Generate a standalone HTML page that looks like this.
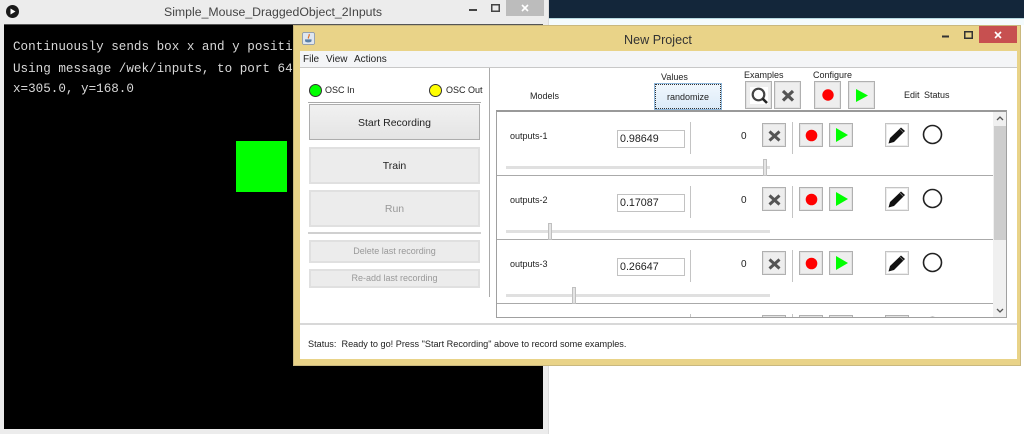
<!DOCTYPE html>
<html><head><meta charset="utf-8"><title>New Project</title>
<style>
html{margin:0;padding:0;width:1024px;height:434px;overflow:hidden;background:#fff}
body{margin:0;padding:0;width:1024px;height:434px;overflow:hidden;position:relative;background:#fff;font-family:"Liberation Sans",sans-serif;color:#222;filter:blur(.3px)}
.a{position:absolute}
.t{position:absolute;white-space:nowrap;font-size:9px;line-height:12px;color:#222}
.menu{font-size:10px;top:54px}
.m{position:absolute;white-space:nowrap;font-family:"Liberation Mono",monospace;font-size:12.6px;line-height:14px;color:#d8d8d8}
.b{position:absolute;box-sizing:border-box;background:#eee;border:1px solid #b0b0b0;box-shadow:inset 0 0 0 1px #e2e2e2}
.big{position:absolute;box-sizing:border-box;background:#ececec;border:2px solid #e0e0e0;text-align:center;font-size:10.5px;color:#222}
.dis{color:#999}
.hl{position:absolute;background:#c4c4c4}
.inp{position:absolute;box-sizing:border-box;background:#fff;border:1px solid #c2c2c2;font-size:10.7px;line-height:16px;padding-left:2px;color:#222;width:68px;height:18px;left:617px}
.tr{position:absolute;left:506px;width:264px;height:3px;background:#e0e0e0}
.th{position:absolute;width:4px;height:17px;background:#e4e4e4;border:1px solid #c0c0c0;box-sizing:border-box}
.z{font-size:10px}
svg{position:absolute;display:block}
</style></head><body>
<!-- background app -->
<div class="a" style="left:549px;top:0;width:475px;height:18px;background:#13263a"></div>
<div class="a" style="left:549px;top:18px;width:475px;height:7px;background:#f4fbfd;border-top:1px solid #b5d8e0;box-sizing:border-box"></div>
<!-- processing window -->
<div class="a" style="left:0;top:0;width:549px;height:434px;background:#ececec;border-right:1px solid #dcdcdc;box-sizing:border-box"></div>
<div class="a" style="left:4px;top:24px;width:539px;height:405px;background:#000"></div>
<div class="a" style="left:4px;top:24px;width:539px;height:1px;background:#555"></div>
<svg style="left:6px;top:5px" width="13" height="13" viewBox="0 0 13 13"><circle cx="6.500" cy="6.500" r="6.500" fill="#1a1a1a"/><path d="M4.500 3.500 9.500 6.500 4.500 9.500Z" fill="#fff"/></svg>
<div class="t" style="left:164px;top:4px;font-size:12.3px;line-height:16px;color:#444">Simple_Mouse_DraggedObject_2Inputs</div>
<svg style="left:469px;top:8px" width="8" height="4"><rect y="1" width="8" height="2" fill="#444"/></svg>
<svg style="left:491px;top:4px" width="9" height="8"><rect x=".75" y=".75" width="7.500" height="6.500" fill="none" stroke="#444" stroke-width="1.500"/></svg>
<div class="a" style="left:506px;top:0;width:38px;height:16px;background:#bcbcbc"></div>
<svg style="left:521px;top:4px" width="8" height="8"><path d="M1 1 7 7M7 1 1 7" stroke="#fff" stroke-width="1.600"/></svg>
<div class="m" style="left:13px;top:40px">Continuously sends box x and y positi</div>
<div class="m" style="left:13px;top:62px">Using message /wek/inputs, to port 64</div>
<div class="m" style="left:13px;top:82px">x=305.0, y=168.0</div>
<div class="a" style="left:236px;top:141px;width:51px;height:51px;background:#0f0"></div>

<!-- New Project window -->
<div class="a" style="left:293px;top:25px;width:728px;height:341px;background:#e9d388;border:1px solid #c9b87e;box-sizing:border-box"></div>
<svg style="left:302px;top:32px" width="13" height="13" viewBox="0 0 15 15"><rect x=".5" y=".5" width="14" height="14" rx="2" fill="#dfe6ef" stroke="#8a97a8"/><path d="M8 2.500C9.500 4.500 6.500 5.200 7.500 7.500" fill="none" stroke="#e0702a" stroke-width="1.400"/><path d="M3.500 8.500h7.500v1.500c0 1.500-1.500 2-3.700 2s-3.800-.5-3.800-2Z" fill="#5a7fa8"/></svg>
<div class="t" style="left:624px;top:31px;font-size:12.6px;line-height:16px;color:#333;margin-top:1px">New Project</div>
<svg style="left:942px;top:35px" width="8" height="3"><rect width="7" height="2" y=".5" fill="#333"/></svg>
<svg style="left:964px;top:31px" width="9" height="8"><rect x=".75" y=".75" width="7.500" height="6.500" fill="none" stroke="#333" stroke-width="1.500"/></svg>
<div class="a" style="left:979px;top:26px;width:38px;height:17px;background:#c75050"></div>
<svg style="left:994px;top:31px" width="8" height="8"><path d="M1 1 7 7M7 1 1 7" stroke="#fff" stroke-width="1.600"/></svg>
<div class="a" style="left:300px;top:51px;width:717px;height:308px;background:#fff"></div>
<div class="a" style="left:300px;top:51px;width:717px;height:17px;box-sizing:border-box;background:#f4f5f7;border-bottom:1px solid #c8c8c8"></div>
<div class="t menu" style="left:303px">File</div>
<div class="t menu" style="left:326px">View</div>
<div class="t menu" style="left:354px">Actions</div>
<div class="hl" style="left:489px;top:68px;width:1px;height:229px;background:#aaa"></div>

<!-- left panel -->
<svg style="left:308px;top:83px" width="15" height="15"><circle cx="7.500" cy="7.500" r="6" fill="#0f0" stroke="#333"/></svg>
<div class="t" style="left:325px;top:84px">OSC In</div>
<svg style="left:428px;top:83px" width="15" height="15"><circle cx="7.500" cy="7.500" r="6" fill="#ff0" stroke="#333"/></svg>
<div class="t" style="left:446px;top:84px">OSC Out</div>
<div class="hl" style="left:308px;top:102px;width:173px;height:1px;background:#aaa"></div>
<div class="big" style="left:309px;top:104px;width:171px;height:36px;line-height:36px;border:1px solid #adadad;background:linear-gradient(#f1f1f1,#e4e4e4)">Start Recording</div>
<div class="big" style="left:309px;top:147px;width:171px;height:37px;line-height:35px">Train</div>
<div class="big dis" style="left:309px;top:190px;width:171px;height:37px;line-height:35px">Run</div>
<div class="hl" style="left:308px;top:232px;width:173px;height:2px;background:#d0d0d0"></div>
<div class="big dis" style="left:309px;top:240px;width:171px;height:23px;line-height:19px;font-size:9px">Delete last recording</div>
<div class="big dis" style="left:309px;top:269px;width:171px;height:19px;line-height:15px;font-size:9px">Re-add last recording</div>

<!-- header -->
<div class="t" style="left:530px;top:90px">Models</div>
<div class="t" style="left:661px;top:71px">Values</div>
<div class="a" style="left:654px;top:83px;width:68px;height:27px;box-sizing:border-box;border:1px solid #8fb8dc;background:linear-gradient(#f0f7fd,#dcebf8)"><div style="position:absolute;inset:0;border:1px dotted #333;text-align:center;font-size:9px;line-height:25px;color:#222">randomize</div></div>
<div class="t" style="left:744px;top:69px">Examples</div>
<div class="t" style="left:813px;top:69px">Configure</div>
<div class="t" style="left:904px;top:89px">Edit</div>
<div class="t" style="left:924px;top:89px">Status</div>
<div class="b" style="left:745px;top:81px;width:27px;height:28px"></div>
<svg style="left:750px;top:87px" width="18" height="18" viewBox="0 0 18 18"><rect width="18" height="17" fill="#fff"/><circle cx="8.500" cy="7.500" r="5.800" fill="none" stroke="#444" stroke-width="2.200"/><path d="M12.500 11.500 17 16" stroke="#222" stroke-width="2.600"/></svg>
<div class="b" style="left:774px;top:81px;width:27px;height:28px"></div>
<svg style="left:781px;top:89px" width="14" height="13"><path d="M2 2 12 11.500M12 2 2 11.500" stroke="#555" stroke-width="3.200"/></svg>
<div class="b" style="left:814px;top:81px;width:27px;height:28px"></div>
<svg style="left:822px;top:89px" width="12" height="12"><circle cx="6" cy="6" r="5.700" fill="#f00"/></svg>
<div class="b" style="left:848px;top:81px;width:27px;height:28px"></div>
<svg style="left:856px;top:89px" width="12" height="13"><path d="M0 0 12 6.500 0 13Z" fill="#0f0"/></svg>

<!-- scroll panel -->
<div class="a" style="left:496px;top:110px;width:511px;height:208px;box-sizing:border-box;background:#fff;border:1px solid #a0a0a0;border-top:2px solid #999"></div>
<div class="hl" style="left:497px;top:175px;width:496px;height:1px;background:#aaa"></div>
<div class="hl" style="left:497px;top:239px;width:496px;height:1px;background:#aaa"></div>
<div class="hl" style="left:497px;top:303px;width:496px;height:1px;background:#aaa"></div>

<!-- row 1 -->
<div class="t" style="left:510px;top:130px">outputs-1</div>
<div class="inp" style="top:130px">0.98649</div>
<div class="hl" style="left:690px;top:122px;width:1px;height:32px"></div>
<div class="t z" style="left:741px;top:131px">0</div>
<div class="b" style="left:762px;top:123px;width:24px;height:24px"></div>
<svg style="left:768px;top:130px" width="13" height="12"><path d="M1.500 1.500 11.500 10.500M11.500 1.500 1.500 10.500" stroke="#555" stroke-width="3"/></svg>
<div class="hl" style="left:792px;top:122px;width:1px;height:32px"></div>
<div class="b" style="left:799px;top:123px;width:24px;height:24px"></div>
<svg style="left:805px;top:129px" width="13" height="13"><circle cx="6.500" cy="6.500" r="5.800" fill="#f00"/></svg>
<div class="b" style="left:829px;top:123px;width:24px;height:24px"></div>
<svg style="left:836px;top:128px" width="12" height="14"><path d="M0 0 12 7 0 14Z" fill="#0f0"/></svg>
<div class="b" style="left:885px;top:123px;width:24px;height:24px;background:#fff;border-color:#c4c4c4;box-shadow:inset 0 0 0 1px #ececec"></div>
<svg style="left:887px;top:125px" width="20" height="20" viewBox="0 0 20 20"><path d="M1.500 18.500 3 13 14 2.500 18 6 7 17Z" fill="#111"/><path d="M13 4 16.500 7.500" stroke="#888" stroke-width=".8"/></svg>
<svg style="left:922px;top:124px" width="21" height="21"><circle cx="10.500" cy="10.500" r="9" fill="#fff" stroke="#222" stroke-width="1.600"/></svg>
<div class="tr" style="top:166px"></div>
<div class="th" style="left:763px;top:159px"></div>

<!-- row 2 -->
<div class="t" style="left:510px;top:194px">outputs-2</div>
<div class="inp" style="top:194px">0.17087</div>
<div class="hl" style="left:690px;top:186px;width:1px;height:32px"></div>
<div class="t z" style="left:741px;top:195px">0</div>
<div class="b" style="left:762px;top:187px;width:24px;height:24px"></div>
<svg style="left:768px;top:194px" width="13" height="12"><path d="M1.500 1.500 11.500 10.500M11.500 1.500 1.500 10.500" stroke="#555" stroke-width="3"/></svg>
<div class="hl" style="left:792px;top:186px;width:1px;height:32px"></div>
<div class="b" style="left:799px;top:187px;width:24px;height:24px"></div>
<svg style="left:805px;top:193px" width="13" height="13"><circle cx="6.500" cy="6.500" r="5.800" fill="#f00"/></svg>
<div class="b" style="left:829px;top:187px;width:24px;height:24px"></div>
<svg style="left:836px;top:192px" width="12" height="14"><path d="M0 0 12 7 0 14Z" fill="#0f0"/></svg>
<div class="b" style="left:885px;top:187px;width:24px;height:24px;background:#fff;border-color:#c4c4c4;box-shadow:inset 0 0 0 1px #ececec"></div>
<svg style="left:887px;top:189px" width="20" height="20" viewBox="0 0 20 20"><path d="M1.500 18.500 3 13 14 2.500 18 6 7 17Z" fill="#111"/><path d="M13 4 16.500 7.500" stroke="#888" stroke-width=".8"/></svg>
<svg style="left:922px;top:188px" width="21" height="21"><circle cx="10.500" cy="10.500" r="9" fill="#fff" stroke="#222" stroke-width="1.600"/></svg>
<div class="tr" style="top:230px"></div>
<div class="th" style="left:548px;top:223px"></div>

<!-- row 3 -->
<div class="t" style="left:510px;top:258px">outputs-3</div>
<div class="inp" style="top:258px">0.26647</div>
<div class="hl" style="left:690px;top:250px;width:1px;height:32px"></div>
<div class="t z" style="left:741px;top:259px">0</div>
<div class="b" style="left:762px;top:251px;width:24px;height:24px"></div>
<svg style="left:768px;top:258px" width="13" height="12"><path d="M1.500 1.500 11.500 10.500M11.500 1.500 1.500 10.500" stroke="#555" stroke-width="3"/></svg>
<div class="hl" style="left:792px;top:250px;width:1px;height:32px"></div>
<div class="b" style="left:799px;top:251px;width:24px;height:24px"></div>
<svg style="left:805px;top:257px" width="13" height="13"><circle cx="6.500" cy="6.500" r="5.800" fill="#f00"/></svg>
<div class="b" style="left:829px;top:251px;width:24px;height:24px"></div>
<svg style="left:836px;top:256px" width="12" height="14"><path d="M0 0 12 7 0 14Z" fill="#0f0"/></svg>
<div class="b" style="left:885px;top:251px;width:24px;height:24px;background:#fff;border-color:#c4c4c4;box-shadow:inset 0 0 0 1px #ececec"></div>
<svg style="left:887px;top:253px" width="20" height="20" viewBox="0 0 20 20"><path d="M1.500 18.500 3 13 14 2.500 18 6 7 17Z" fill="#111"/><path d="M13 4 16.500 7.500" stroke="#888" stroke-width=".8"/></svg>
<svg style="left:922px;top:252px" width="21" height="21"><circle cx="10.500" cy="10.500" r="9" fill="#fff" stroke="#222" stroke-width="1.600"/></svg>
<div class="tr" style="top:294px"></div>
<div class="th" style="left:572px;top:287px"></div>

<!-- row 4 clipped -->
<div class="a" style="left:497px;top:304px;width:496px;height:13px;overflow:hidden">
<div class="hl" style="left:193px;top:10px;width:1px;height:4px"></div>
<div class="hl" style="left:295px;top:10px;width:1px;height:4px"></div>
<div class="b" style="left:265px;top:11px;width:24px;height:24px"></div>
<div class="b" style="left:302px;top:11px;width:24px;height:24px"></div>
<div class="b" style="left:332px;top:11px;width:24px;height:24px"></div>
<div class="b" style="left:388px;top:11px;width:24px;height:24px"></div>
<svg style="left:425px;top:12px" width="21" height="21"><circle cx="10.500" cy="10.500" r="9" fill="#fff" stroke="#222" stroke-width="1.600"/></svg>
</div>

<!-- scrollbar -->
<div class="a" style="left:993px;top:112px;width:13px;height:205px;background:#f0f0f0"></div>
<div class="a" style="left:994px;top:126px;width:12px;height:114px;background:#cdcdcd"></div>
<svg style="left:996px;top:115px" width="8" height="6"><path d="M1 5 4 2 7 5" fill="none" stroke="#555" stroke-width="1.300"/></svg>
<svg style="left:996px;top:308px" width="8" height="6"><path d="M1 1 4 4 7 1" fill="none" stroke="#555" stroke-width="1.300"/></svg>

<!-- status -->
<div class="a" style="left:300px;top:323px;width:717px;height:2px;background:#d8d8d8"></div>
<div class="t" style="left:308px;top:338px;font-size:9.15px">Status:&nbsp; Ready to go! Press "Start Recording" above to record some examples.</div>
</body></html>
